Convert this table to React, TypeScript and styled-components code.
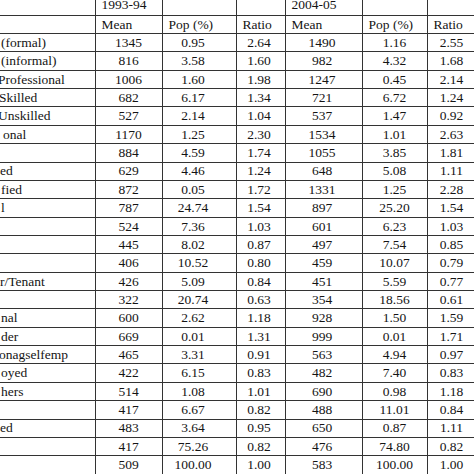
import React from 'react';
import styled, { createGlobalStyle } from 'styled-components';

const GlobalStyle = createGlobalStyle`
  html, body {
    margin: 0;
    padding: 0;
    background: #fff;
    overflow: hidden;
  }
  body {
    font-family: "Liberation Serif", "Times New Roman", serif;
    color: #141414;
  }
`;

const Page = styled.div`
  width: 474px;
  height: 474px;
  overflow: hidden;
`;

const Table = styled.table`
  border-collapse: collapse;
  table-layout: fixed;
  width: 476px;
  margin-top: -3px;
  font-family: "Liberation Serif", "Times New Roman", serif;
  font-size: 13.5px;
  line-height: 1;
  color: #141414;
`;

const Cell = styled.td<{ $pad?: number }>`
  border: 1px solid #333;
  height: 17.36px;
  padding: 0 ${(p) => p.$pad ?? 0}px 0 0;
  text-align: center;
  vertical-align: middle;
  white-space: nowrap;
  overflow: hidden;
`;

// $open: the year cell, which runs into the "Mean" cell below with no rule
const HeadCell = styled.td<{ $open?: boolean }>`
  border: 1px solid #333;
  ${(p) => (p.$open ? 'border-bottom: none; vertical-align: top;' : 'vertical-align: middle;')}
  height: 17px;
  padding: 0 0 0 6px;
  text-align: left;
  white-space: nowrap;
`;

const LabelCell = styled.td<{ $shift: number }>`
  border: 1px solid #333;
  border-left: none;
  height: 17.36px;
  padding: 0;
  text-align: left;
  text-indent: ${(p) => p.$shift}px;
  white-space: nowrap;
  overflow: hidden;
`;

type Row = [string, number, string, string, string, string, string, string];

const rows: Row[] = [
  ['(formal)', 1, '1345', '0.95', '2.64', '1490', '1.16', '2.55'],
  ['(informal)', 1, '816', '3.58', '1.60', '982', '4.32', '1.68'],
  ['Professional', -2, '1006', '1.60', '1.98', '1247', '0.45', '2.14'],
  ['Skilled', -1, '682', '6.17', '1.34', '721', '6.72', '1.24'],
  ['Unskilled', -2, '527', '2.14', '1.04', '537', '1.47', '0.92'],
  ['onal', 3, '1170', '1.25', '2.30', '1534', '1.01', '2.63'],
  ['', 0, '884', '4.59', '1.74', '1055', '3.85', '1.81'],
  ['ed', 0, '629', '4.46', '1.24', '648', '5.08', '1.11'],
  ['fied', 1, '872', '0.05', '1.72', '1331', '1.25', '2.28'],
  ['l', 1, '787', '24.74', '1.54', '897', '25.20', '1.54'],
  ['', 0, '524', '7.36', '1.03', '601', '6.23', '1.03'],
  ['', 0, '445', '8.02', '0.87', '497', '7.54', '0.85'],
  ['', 0, '406', '10.52', '0.80', '459', '10.07', '0.79'],
  ['r/Tenant', 0, '426', '5.09', '0.84', '451', '5.59', '0.77'],
  ['', 0, '322', '20.74', '0.63', '354', '18.56', '0.61'],
  ['nal', 1, '600', '2.62', '1.18', '928', '1.50', '1.59'],
  ['der', 1, '669', '0.01', '1.31', '999', '0.01', '1.71'],
  ['onagselfemp', -1, '465', '3.31', '0.91', '563', '4.94', '0.97'],
  ['oyed', 1, '422', '6.15', '0.83', '482', '7.40', '0.83'],
  ['hers', 1, '514', '1.08', '1.01', '690', '0.98', '1.18'],
  ['', 0, '417', '6.67', '0.82', '488', '11.01', '0.84'],
  ['ed', 0, '483', '3.64', '0.95', '650', '0.87', '1.11'],
  ['', 0, '417', '75.26', '0.82', '476', '74.80', '0.82'],
  ['', 0, '509', '100.00', '1.00', '583', '100.00', '1.00'],
];

// right padding per value column, to sit the figures where the scan has them
const pads = [0, 12, 3, 3, 0, 0];

const App: React.FC = (): JSX.Element => {
  return (
    <Page>
      <GlobalStyle />
      <Table>
        <colgroup>
          <col style={{ width: 95 }} />
          <col style={{ width: 67 }} />
          <col style={{ width: 74 }} />
          <col style={{ width: 49 }} />
          <col style={{ width: 77 }} />
          <col style={{ width: 65 }} />
          <col style={{ width: 49 }} />
        </colgroup>
        <thead>
          <tr>
            <HeadCell style={{ borderLeft: 'none' }} />
            <HeadCell $open>1993-94</HeadCell>
            <HeadCell />
            <HeadCell />
            <HeadCell $open>2004-05</HeadCell>
            <HeadCell />
            <HeadCell />
          </tr>
          <tr>
            <HeadCell style={{ borderLeft: 'none' }} />
            <HeadCell>Mean</HeadCell>
            <HeadCell>Pop (%)</HeadCell>
            <HeadCell>Ratio</HeadCell>
            <HeadCell>Mean</HeadCell>
            <HeadCell>Pop (%)</HeadCell>
            <HeadCell>Ratio</HeadCell>
          </tr>
        </thead>
        <tbody>
          {rows.map(([label, shift, ...values], i) => (
            <tr key={i}>
              <LabelCell $shift={shift}>{label}</LabelCell>
              {values.map((v, j) => (
                <Cell key={j} $pad={pads[j]}>
                  {v}
                </Cell>
              ))}
            </tr>
          ))}
        </tbody>
      </Table>
    </Page>
  );
};

export default App;
